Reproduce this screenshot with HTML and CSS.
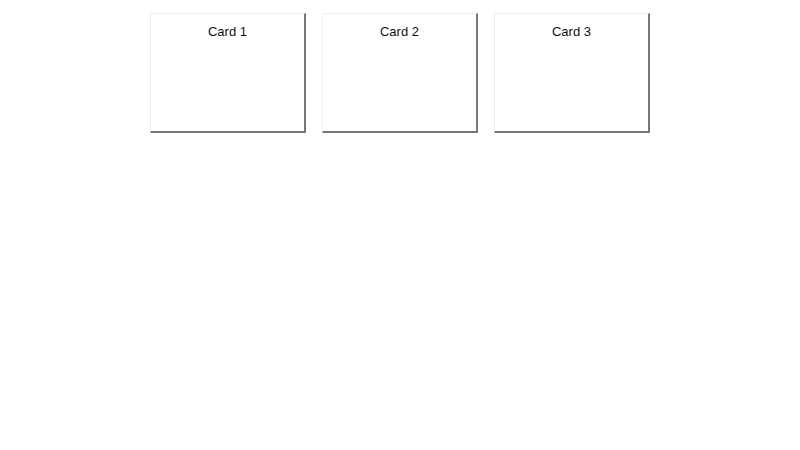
FILE: index.html
```
<!DOCTYPE html>
<html lang="en">
<head>
  <meta charset="UTF-8">
  <title>Cards</title>
  <link rel="stylesheet" href="styles.css">
</head>
<body>
  <div class="card-row">
    <div class="card">Card 1</div>
    <div class="card">Card 2</div>
    <div class="card">Card 3</div>
  </div>
</body>
</html>
```

FILE: styles.css
```
body {
  margin: 0;
  padding: 13px 0 0;
  font-family: "Liberation Sans", Arial, sans-serif;
  font-size: 13px;
  color: #111;
  background: #fff;
}

/* row of three equal cards */
.card-row {
  display: flex;
  gap: 16px;
  max-width: 500px;
  margin: 0 auto;
}

/* light top/left edge, darker raised edge on the right and bottom */
.card {
  flex: 1;
  box-sizing: border-box;
  height: 120px;
  padding: 10px;
  text-align: center;
  background: #fff;
  border-top: 1px solid #eee;
  border-left: 1px solid #eee;
  border-right: 2px solid #777;
  border-bottom: 2px solid #777;
}
```
